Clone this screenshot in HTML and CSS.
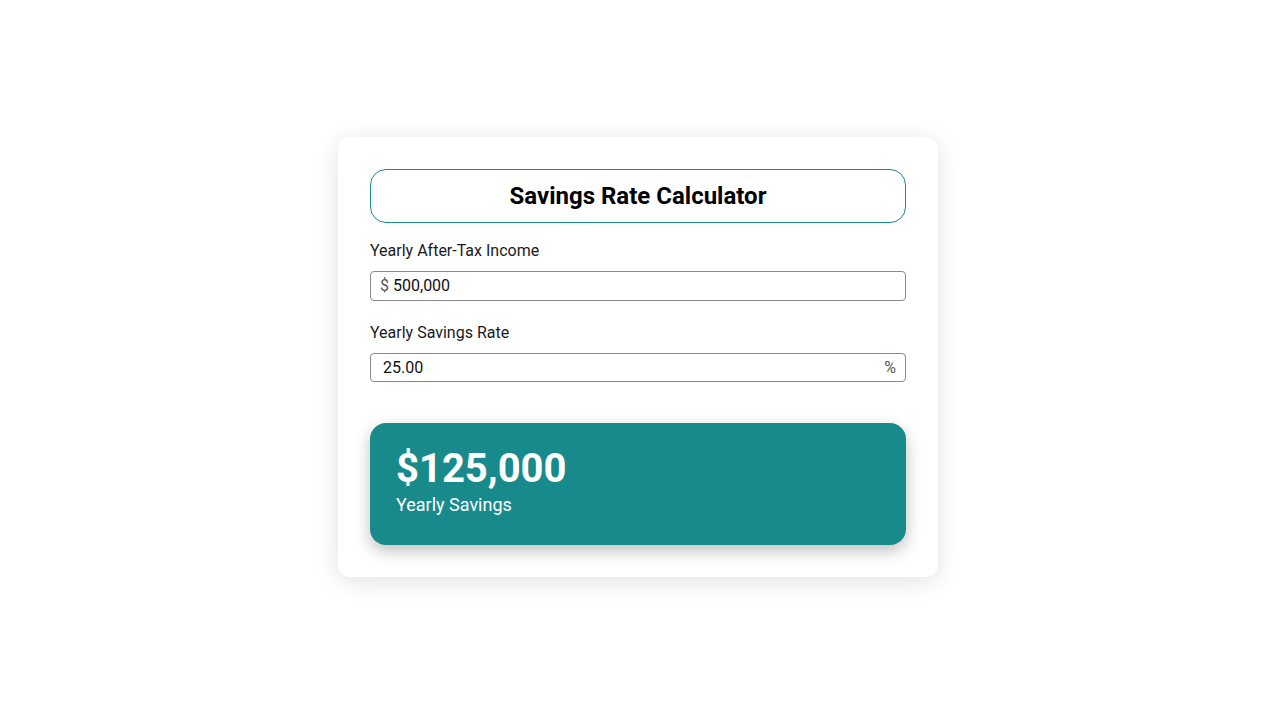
FILE: index.html
```html
<!DOCTYPE html>
<html>
<head>
<meta charset="utf-8">
<link rel="stylesheet" href="styles.css">
</head>
<body>
<main class="page">
  <section class="card">
    <h1 class="title">Savings Rate Calculator</h1>
    <label class="label">Yearly After-Tax Income</label>
    <div class="field">
      <span class="prefix">$</span>
      <span class="value">500,000</span>
    </div>
    <label class="label label-second">Yearly Savings Rate</label>
    <div class="field">
      <span class="value value-pad">25.00</span>
      <span class="suffix">%</span>
    </div>
    <div class="result">
      <div class="amount">$125,000</div>
      <div class="caption">Yearly Savings</div>
    </div>
  </section>
</main>
</body>
</html>
```
FILE: styles.css
```css
* { box-sizing: border-box; }
html, body { margin: 0; padding: 0; }
body {
  font-family: Roboto, "Liberation Sans", sans-serif;
  background: #ffffff;
  color: #111;
}
.page {
  width: 1280px;
  height: 720px;
  padding: 0 4px 6px 0;
  display: flex;
  justify-content: center;
  align-items: center;
}
.card {
  width: 600px;
  height: 440px;
  background: #fff;
  border-radius: 12px;
  box-shadow: 0 4px 24px rgba(0,0,0,0.12);
  padding: 32px;
  display: flex;
  flex-direction: column;
}
.title {
  margin: 0;
  height: 54px;
  padding-top: 0;
  border: 1px solid #1a8a8c;
  border-radius: 16px;
  font-size: 24px;
  font-weight: 700;
  display: flex;
  align-items: center;
  justify-content: center;
  color: #000;
}
.label {
  display: block;
  font-size: 16px;
  line-height: 24px;
  margin-top: 16px;
  margin-bottom: 8px;
  color: #1a1a1a;
}
.label-second { margin-top: 20px; margin-bottom: 8px; }
.field {
  height: 30px;
  border: 1px solid #8a8a8a;
  border-radius: 4px;
  display: flex;
  align-items: center;
  padding: 0 9px;
  font-size: 16px;
}
.prefix { color: #555; margin-right: 4px; }
.value { color: #111; flex: 1; }
.value-pad { padding-left: 3px; }
.suffix { color: #555; }
.result {
  margin-top: 41px;
  height: 122px;
  background: #198a8c;
  border-radius: 16px;
  box-shadow: 0 6px 16px rgba(0,0,0,0.25);
  padding: 22px 26px;
  color: #fff;
}
.amount {
  font-size: 40px;
  font-weight: 700;
  line-height: 47px;
}
.caption {
  font-size: 18px;
  line-height: 24px;
  margin-top: 1px;
}
```
